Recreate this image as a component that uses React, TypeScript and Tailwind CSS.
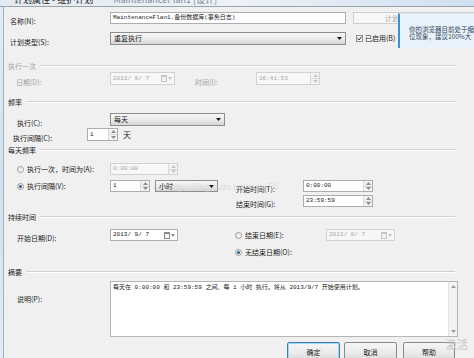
import React from "react";

const CJK = "font-['Noto_Sans_CJK_SC',sans-serif]";
const MONO = "font-['Liberation_Mono','Noto_Sans_CJK_SC',monospace]";

function L({ children, disabled, cls = "" }: { children: React.ReactNode; disabled?: boolean; cls?: string }) {
  return (
    <span className={`${CJK} whitespace-nowrap text-[7px] leading-none ${disabled ? "text-[#a3a3a3]" : "text-[#1a1a1a]"} ${cls}`}>
      {children}
    </span>
  );
}

function Spin({ disabled }: { disabled?: boolean }) {
  const c = disabled ? "#c6c6c6" : "#8c8c8c";
  return (
    <div className="flex h-full w-[9px] flex-col border-l border-[#dadada] bg-[#f3f3f3]">
      <div className="flex flex-1 items-center justify-center border-b border-[#dadada]">
        <svg width="5" height="3" viewBox="0 0 5 3">
          <path d="M0 3 L2.5 0 L5 3Z" fill={c} />
        </svg>
      </div>
      <div className="flex flex-1 items-center justify-center">
        <svg width="5" height="3" viewBox="0 0 5 3">
          <path d="M0 0 L2.5 3 L5 0Z" fill={c} />
        </svg>
      </div>
    </div>
  );
}

function Cal({ disabled }: { disabled?: boolean }) {
  const c = disabled ? "#c6c6c6" : "#8c8c8c";
  return (
    <div className="flex h-full items-center gap-[1px] pr-[2px]">
      <svg width="6" height="7" viewBox="0 0 6 7">
        <rect x="0.5" y="0.5" width="5" height="6" fill="#f4f4f4" stroke={c} strokeWidth="1" />
        <rect x="0.5" y="0.5" width="5" height="1.5" fill={c} />
      </svg>
      <svg width="4" height="3" viewBox="0 0 4 3">
        <path d="M0 0 L4 0 L2 3Z" fill={c} />
      </svg>
    </div>
  );
}

function Field({
  cls,
  value,
  disabled,
  spin,
  cal,
}: {
  cls: string;
  value: string;
  disabled?: boolean;
  spin?: boolean;
  cal?: boolean;
}) {
  return (
    <div
      className={`${cls} flex h-full shrink-0 items-stretch border ${
        disabled ? "border-[#d2d2d2] bg-[#f7f7f7] text-[#a6a6a6]" : "border-[#abadb3] bg-white text-[#1a1a1a]"
      }`}
    >
      <div className={`${MONO} flex flex-1 items-center overflow-hidden whitespace-pre pl-[2px] text-[6px] leading-none`}>
        {value}
      </div>
      {spin && <Spin disabled={disabled} />}
      {cal && <Cal disabled={disabled} />}
    </div>
  );
}

function Select({ cls, value }: { cls: string; value: string }) {
  return (
    <div
      className={`${cls} flex h-full shrink-0 items-center justify-between border border-[#8e8e8e] bg-linear-to-b from-[#f7f7f7] via-[#ebebeb] to-[#d6d6d6] pl-[3px] pr-[3px]`}
    >
      <L>{value}</L>
      <svg width="5" height="3" viewBox="0 0 5 3">
        <path d="M0 0 L5 0 L2.5 3Z" fill="#151515" />
      </svg>
    </div>
  );
}

function Radio({ checked }: { checked?: boolean }) {
  return (
    <span className="flex h-[7px] w-[7px] shrink-0 items-center justify-center rounded-full border border-[#9c9c9c] bg-linear-to-br from-[#dedede] to-white">
      {checked && <span className="h-[3px] w-[3px] rounded-full bg-[#2f5f7f]" />}
    </span>
  );
}

function Header({ title, disabled, cls }: { title: string; disabled?: boolean; cls: string }) {
  return (
    <div className={`${cls} flex h-[10px] w-[447px] items-center`}>
      <L disabled={disabled}>{title}</L>
      <div className="ml-[4px] h-[2px] flex-1 border-t border-b border-t-[#d0d0d0] border-b-white" />
    </div>
  );
}

function Btn({ label, focus, cls }: { label: string; focus?: boolean; cls: string }) {
  return (
    <div
      className={`${cls} flex h-[20px] shrink-0 items-start justify-center rounded-[2px] border pt-[6px] ${
        focus ? "border-[#3c7fb1] shadow-[inset_0_0_0_1px_#9fd5f7]" : "border-[#8a8a8a]"
      } bg-linear-to-b from-[#f5f5f5] via-[#ececec] to-[#d8d8d8]`}
    >
      <L>{label}</L>
    </div>
  );
}

export default function App() {
  return (
    <div className="relative h-[358px] w-[474px] overflow-hidden bg-[#f0f0f0]">
      {/* title bar remnant */}
      <div className="h-[7px] overflow-hidden border-b border-[#9aa4ad] bg-linear-to-r from-[#e4eaf1] via-[#eef2f6] to-[#cfdff0]">
        <div className="-mt-[5px] flex items-center gap-[20px] pl-[14px]">
          <span className={`${CJK} text-[9px] leading-none text-[#222]`}>计划属性 - 维护计划</span>
          <span className={`${CJK} text-[9px] leading-none text-[#7a8a9a]`}>MaintenancePlan1 [设计]</span>
        </div>
      </div>

      <div className="flex">
        <div className="box-content h-[351px] w-[3px] shrink-0 border-r border-[#a7b0b8] bg-linear-to-b from-[#e2ebf4] via-[#cfe1f1] to-[#e2ebf4]" />
        <div className="flex flex-col pl-[4px]">
          {/* Name */}
          <div className="mt-[5px] flex h-[12px] items-center">
            <div className="w-[102px] shrink-0 pl-[2px]">
              <L>名称(N):</L>
            </div>
            <Field cls="w-[236px]" value="MaintenanceFlan1.备份数据库(事务日志)" />
            <div className="ml-[7px] flex h-full w-[130px] shrink-0 items-center border border-[#cfcfcf] bg-[#f7f7f7] pl-[31px]">
              <L disabled>计划...</L>
            </div>
          </div>

          {/* Type */}
          <div className="mt-[8px] flex h-[13px] items-center">
            <div className="w-[102px] shrink-0 pl-[2px]">
              <L>计划类型(S):</L>
            </div>
            <Select cls="w-[236px]" value="重复执行" />
            <span className="ml-[10px] flex h-[7px] w-[7px] shrink-0 items-center justify-center border border-[#8e8f8f] bg-linear-to-br from-[#e2e2e2] to-white">
              <svg width="5" height="5" viewBox="0 0 5 5">
                <path d="M0.5 2.5 L2 4 L4.5 0.8" stroke="#333" strokeWidth="1" fill="none" />
              </svg>
            </span>
            <L cls="ml-[2px]">已启用(B)</L>
          </div>

          {/* Once */}
          <Header cls="mt-[16px]" title="执行一次" disabled />
          <div className="mt-[1px] flex h-[13px] items-center">
            <div className="w-[102px] shrink-0 pl-[8px]">
              <L disabled>日期(D):</L>
            </div>
            <Field cls="w-[65px]" value="2013/ 9/ 7" disabled cal />
            <div className="ml-[20px] w-[61px] shrink-0">
              <L disabled>时间(I):</L>
            </div>
            <Field cls="w-[64px]" value="16:41:53" disabled spin />
          </div>

          {/* Frequency */}
          <Header cls="mt-[12px]" title="频率" />
          <div className="mt-[6px] flex h-[13px] items-center">
            <div className="w-[102px] shrink-0 pl-[9px]">
              <L>执行(C):</L>
            </div>
            <Select cls="w-[115px]" value="每天" />
          </div>
          <div className="mt-[2px] flex h-[13px] items-center">
            <div className="w-[79px] shrink-0 pl-[5px]">
              <L>执行间隔(C):</L>
            </div>
            <Field cls="w-[31px]" value="1" spin />
            <L cls="ml-[5px] text-[8px]">天</L>
          </div>

          {/* Daily frequency */}
          <Header cls="mt-[4px]" title="每天频率" />
          <div className="mt-[8px] flex h-[12px] items-center">
            <div className="flex w-[102px] shrink-0 items-center pl-[9px]">
              <Radio />
              <L cls="ml-[3px]">执行一次，时间为(A):</L>
            </div>
            <Field cls="w-[68px]" value="0:00:00" disabled spin />
          </div>
          <div className="mt-[5px] flex h-[12px] items-center">
            <div className="flex w-[102px] shrink-0 items-center pl-[9px]">
              <Radio checked />
              <L cls="ml-[3px]">执行间隔(V):</L>
            </div>
            <Field cls="w-[40px]" value="1" spin />
            <Select cls="ml-[5px] w-[63px]" value="小时" />
            <div className="ml-[18px] w-[67px] shrink-0">
              <L>开始时间(T):</L>
            </div>
            <Field cls="w-[70px]" value="0:00:00" spin />
          </div>
          <div className="mt-[3px] flex h-[12px] items-center pl-[228px]">
            <div className="w-[67px] shrink-0">
              <L>结束时间(G):</L>
            </div>
            <Field cls="w-[70px]" value="23:59:59" spin />
          </div>

          {/* Duration */}
          <Header cls="mt-[5px]" title="持续时间" />
          <div className="mt-[7px] flex h-[12px] items-center">
            <div className="w-[102px] shrink-0 pl-[9px]">
              <L>开始日期(D):</L>
            </div>
            <Field cls="w-[68px]" value="2013/ 9/ 7" cal />
            <div className="ml-[57px] flex w-[91px] shrink-0 items-center">
              <Radio />
              <L cls="ml-[3px]">结束日期(E):</L>
            </div>
            <Field cls="w-[69px]" value="2013/ 9/ 7" disabled cal />
          </div>
          <div className="mt-[5px] flex h-[12px] items-center pl-[227px]">
            <Radio checked />
            <L cls="ml-[3px]">无结束日期(O):</L>
          </div>

          {/* Summary */}
          <Header cls="mt-[9px]" title="摘要" />
          <div className="mt-[4px] flex h-[56px] items-start">
            <div className="w-[102px] shrink-0 pl-[9px] pt-[3px]">
              <L>说明(P):</L>
            </div>
            <div className="flex h-full w-[348px] shrink-0 border border-[#b5b5b5] bg-white">
              <div className={`${MONO} flex-1 whitespace-pre pl-[2px] pt-[3px] text-[6px] leading-none text-[#1a1a1a]`}>
                每天在 0:00:00 和 23:59:59 之间、每 1 小时 执行。将从 2013/9/7 开始使用计划。
              </div>
              <div className="flex w-[9px] flex-col items-center justify-between border-l border-[#e2e2e2] bg-[#f3f3f3] py-[3px]">
                <svg width="5" height="3" viewBox="0 0 5 3">
                  <path d="M0 3 L2.5 0 L5 3Z" fill="#9a9a9a" />
                </svg>
                <svg width="5" height="3" viewBox="0 0 5 3">
                  <path d="M0 0 L2.5 3 L5 0Z" fill="#9a9a9a" />
                </svg>
              </div>
            </div>
          </div>

          {/* Buttons */}
          <div className="mt-[5px] flex h-[20px] items-start">
            <Btn cls="ml-[279px] w-[53px]" label="确定" focus />
            <Btn cls="ml-[4px] w-[53px]" label="取消" />
            <Btn cls="ml-[6px] w-[52px]" label="帮助" />
          </div>
        </div>
      </div>

      {/* faint watermark url */}
      <div className="pointer-events-none absolute left-[168px] top-[182px] font-['Liberation_Serif',serif] text-[10px] leading-none text-[#d2d2d2] opacity-60">
        http://blog.csdn.net/yupu56
      </div>

      {/* browser zoom tooltip */}
      <div className="absolute left-[398px] top-[13px] h-[35px] w-[80px] border-l-2 border-t border-l-[#3f8fd8] border-t-[#d8e4ef] bg-[#e9f2fb] pl-[9px] pt-[12px]">
        <div className={`${CJK} whitespace-nowrap text-[6.5px] leading-[7px] text-[#33475a]`}>你的浏览器目前处于缩</div>
        <div className={`${CJK} whitespace-nowrap text-[6.5px] leading-[7px] text-[#33475a]`}>位现象，建议100%大</div>
      </div>

      {/* activation watermark */}
      <div className={`pointer-events-none absolute left-[446px] top-[339px] ${CJK} text-[11px] leading-none text-[#c4c4c4]`}>
        激活
      </div>
    </div>
  );
}
